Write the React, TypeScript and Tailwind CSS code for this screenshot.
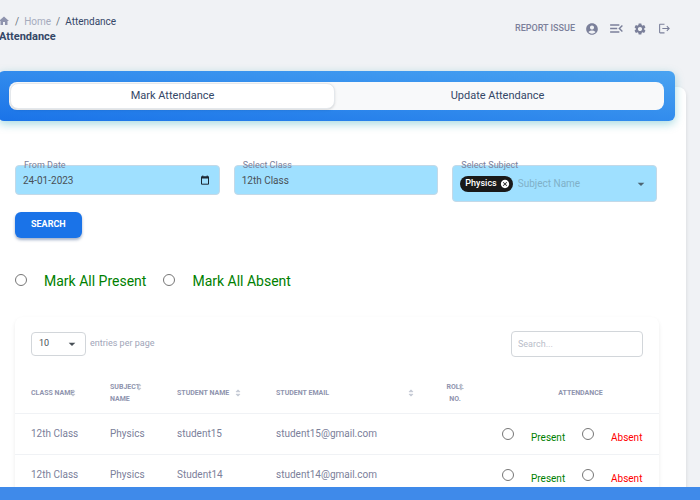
import React from "react";
import {
  MdAccountCircle,
  MdArrowDropDown,
  MdCancel,
  MdHome,
  MdLogout,
  MdMenuOpen,
  MdSettings,
} from "react-icons/md";

const students = [
  { id: 15, className: "12th Class", subject: "Physics", name: "student15", email: "student15@gmail.com" },
  { id: 14, className: "12th Class", subject: "Physics", name: "Student14", email: "student14@gmail.com" },
];

const radioClass =
  "appearance-none size-3 shrink-0 rounded-full border border-[#767676] bg-white checked:bg-[#1a73e8]";

const fieldClass = "relative flex items-center rounded border border-[#c3d9e8] bg-[#9fe0ff] px-[7px]";

const fieldLabelClass = "absolute -top-[7px] left-2 text-[9px] leading-3 text-[#7b809a]";

const SortIcon = ({ className }: { className: string }) => (
  <svg viewBox="0 0 6 8" className={`absolute h-2 w-[6px] ${className}`} aria-hidden="true">
    <path d="M1 2.8 L3 0.8 L5 2.8 Z M1 5.2 L3 7.2 L5 5.2 Z" fill="#c4c9d4" stroke="#b4bac8" strokeWidth="0.5" />
  </svg>
);

const CalendarIcon = () => (
  <svg viewBox="0 0 10 10" className="mr-[2px] size-[10px] shrink-0" aria-hidden="true">
    <path d="M1.5 2 H8.5 V9.2 H1.5 Z" fill="none" stroke="#1c2733" strokeWidth="1" />
    <path d="M1 1.5 H9 V3.5 H1 Z M2.3 0.5 H3.3 V2 H2.3 Z M6.7 0.5 H7.7 V2 H6.7 Z" fill="#1c2733" />
  </svg>
);

const Header: React.FC = () => (
  <header className="flex items-start justify-between pr-6">
    <div className="-ml-px pt-[13px]">
      <nav className="flex h-4 items-center text-[10px] text-[#6c757d]">
        <a href="#" aria-label="Dashboard" className="-ml-px text-[#8f94ae]">
          <MdHome size={12} />
        </a>
        <span className="px-[5px]">/</span>
        <a href="#" className="text-[#a5abbd]">Home</a>
        <span className="px-[5px]">/</span>
        <span className="text-[#344767]">Attendance</span>
      </nav>
      <h1 className="text-[11px] leading-4 font-bold text-[#344767]">Attendance</h1>
    </div>
    <div className="flex items-center pt-5 text-[#7b809a]">
      <button className="mr-[5px] pt-px text-[9px] font-medium">REPORT ISSUE</button>
      <button aria-label="Account" className="flex w-6 justify-center">
        <MdAccountCircle size={14} />
      </button>
      <button aria-label="Toggle menu" className="flex w-6 justify-center">
        <MdMenuOpen size={17} />
      </button>
      <button aria-label="Settings" className="flex w-6 justify-center">
        <MdSettings size={14} />
      </button>
      <button aria-label="Log out" className="flex w-6 justify-center">
        <MdLogout size={13} />
      </button>
    </div>
  </header>
);

const Filters: React.FC = () => (
  <form className="flex flex-col items-start gap-[10px]" onSubmit={(e) => e.preventDefault()}>
    <div className="grid w-full grid-cols-3 items-start gap-[14px]">
      <div className={`h-[30px] ${fieldClass}`}>
        <label htmlFor="date" className={fieldLabelClass}>
          From Date
        </label>
        <input
          id="date"
          defaultValue="24-01-2023"
          className="w-full min-w-0 bg-transparent text-[10px] text-[#495057] outline-none"
        />
        <CalendarIcon />
      </div>
      <div className={`h-[30px] ${fieldClass}`}>
        <label htmlFor="class" className={fieldLabelClass}>
          Select Class
        </label>
        <select
          id="class"
          className="w-full appearance-none bg-transparent text-[10px] text-[#495057] outline-none"
        >
          <option>12th Class</option>
        </select>
      </div>
      <div className={`h-[37px] gap-[5px] ${fieldClass}`}>
        <label htmlFor="subject" className={fieldLabelClass}>
          Select Subject
        </label>
        <span className="flex h-4 shrink-0 items-center gap-[3px] rounded-full bg-[#191919] pr-[3px] pl-[5px] text-[9px] font-medium text-white">
          Physics
          <button type="button" aria-label="Remove Physics">
            <MdCancel size={10} />
          </button>
        </span>
        <input
          id="subject"
          placeholder="Subject Name"
          className="w-full min-w-0 bg-transparent text-[10px] outline-none placeholder:text-[#7fb0c8]"
        />
        <MdArrowDropDown size={16} className="shrink-0 text-[#4c6472]" />
      </div>
    </div>
    <button
      type="submit"
      className="h-[26px] rounded-md bg-[#1a73e8] px-4 text-[9px] font-bold text-white shadow-[0_2px_3px_rgba(26,60,120,0.4)]"
    >
      SEARCH
    </button>
  </form>
);

const StudentTable: React.FC = () => (
  <section className="mt-[25px] -mr-[2px] rounded-lg bg-white shadow-[0_2px_4px_rgba(0,0,0,0.08)]">
    <div className="flex items-center justify-between px-4 pt-[14px]">
      <div className="flex items-center gap-1 text-[9px] text-[#a0a5b8]">
        <div className="relative">
          <select
            id="entries"
            className="h-6 w-[55px] appearance-none rounded border border-[#d2d6da] bg-white pl-[7px] text-[9px] text-[#495057]"
          >
            <option>10</option>
          </select>
          <MdArrowDropDown size={16} className="pointer-events-none absolute top-1 right-[6px] text-[#495057]" />
        </div>
        <label htmlFor="entries">entries per page</label>
      </div>
      <input
        aria-label="Search entries"
        placeholder="Search..."
        className="h-[26px] w-[132px] rounded border border-[#d2d6da] px-[6px] text-[9px] placeholder:text-[#b9bdc9]"
      />
    </div>
    <table className="mt-4 w-full table-fixed text-left text-[10px] text-[#7b809a]">
      <colgroup>
        <col className="w-[79px]" />
        <col className="w-[67px]" />
        <col className="w-[99px]" />
        <col />
        <col className="w-[54px]" />
        <col className="w-[177px]" />
      </colgroup>
      <thead className="text-[7px] leading-3 text-[#8f94ae]">
        <tr className="h-10 border-b border-[#f0f2f5]">
          <th className="relative pl-4 font-bold whitespace-nowrap">
            CLASS NAME
            <SortIcon className="top-4 right-[18px]" />
          </th>
          <th className="relative pl-4 font-bold">
            SUBJECT <br />
            NAME
            <SortIcon className="top-[10px] right-[19px]" />
          </th>
          <th className="relative pl-4 font-bold whitespace-nowrap">
            STUDENT NAME
            <SortIcon className="top-4 right-[19px]" />
          </th>
          <th className="relative pl-4 font-bold">
            STUDENT EMAIL
            <SortIcon className="top-4 right-[14px]" />
          </th>
          <th className="relative px-4 text-center font-bold">
            ROLL <br />
            NO.
            <SortIcon className="top-[10px] right-[18px]" />
          </th>
          <th className="pl-5 text-center font-bold">ATTENDANCE</th>
        </tr>
      </thead>
      <tbody>
        {students.map((student) => (
          <tr key={student.id} className="h-[41px] border-b border-[#f0f2f5]">
            <td className="pl-4">{student.className}</td>
            <td className="pl-4">{student.subject}</td>
            <td className="pl-4">{student.name}</td>
            <td className="pl-4">{student.email}</td>
            <td />
            <td className="pl-5">
              <div className="flex h-5 items-start">
                <label className="flex w-20 gap-[17px] text-[#008000]">
                  <input type="radio" name={`attendance-${student.id}`} className={`mt-1 ${radioClass}`} />
                  <span className="pt-[6px]">Present</span>
                </label>
                <label className="flex gap-[17px] text-[#ff0000]">
                  <input type="radio" name={`attendance-${student.id}`} className={`mt-1 ${radioClass}`} />
                  <span className="pt-[6px]">Absent</span>
                </label>
              </div>
            </td>
          </tr>
        ))}
      </tbody>
    </table>
  </section>
);

const App: React.FC = () => {
  return (
    <div className="flex h-screen flex-col bg-[#f0f2f5] font-['Roboto',sans-serif]">
      <div className="flex min-h-0 flex-1 flex-col overflow-hidden">
        <Header />
        <main className="mt-[42px] mr-[14px] flex-1 rounded-tr-lg bg-white shadow-[0_2px_4px_rgba(0,0,0,0.12)]">
          <div className="relative -mt-4 mr-[11px] -ml-0.5 rounded-md bg-linear-to-tr from-[#1a73e8] to-[#49a3f1] p-[11px] shadow-[0_3px_10px_rgba(0,150,170,0.35)]">
            <div className="grid h-7 grid-cols-2 rounded-lg bg-[#f8f9fa] p-px pr-1 text-[11px] text-[#344767]">
              <button className="rounded-lg border border-[#e4e8ec] bg-white pt-px shadow-sm">Mark Attendance</button>
              <button className="pt-px">Update Attendance</button>
            </div>
          </div>
          <div className="pt-11 pr-[29px] pl-[15px]">
            <Filters />
            <div className="mt-[33px] flex gap-[17px] text-[14px] text-[#008000]">
              <label className="flex gap-[17px]">
                <input type="radio" name="mark-all" className={`mt-[3px] ${radioClass}`} />
                Mark All Present
              </label>
              <label className="flex gap-[17px]">
                <input type="radio" name="mark-all" className={`mt-[3px] ${radioClass}`} />
                Mark All Absent
              </label>
            </div>
            <StudentTable />
          </div>
        </main>
      </div>
      <footer className="h-[13px] shrink-0 bg-[#3f8aea]" />
    </div>
  );
};

export default App;
